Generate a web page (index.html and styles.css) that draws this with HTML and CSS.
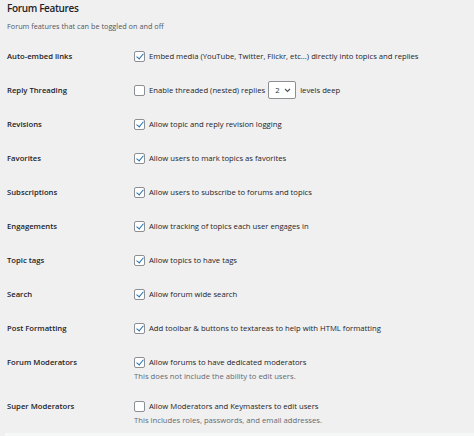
FILE: index.html
```html
<!DOCTYPE html>
<html lang="en">
<head>
    <meta charset="UTF-8">
    <title>Forum Features</title>
    <link rel="stylesheet" href="styles.css">
</head>
<body>
    <div class="wrap">
        <h2 class="title">Forum Features</h2>
        <p class="intro">Forum features that can be toggled on and off</p>

        <div class="settings">
            <div class="row">
                <div class="label">Auto-embed links</div>
                <div class="field"><span class="check on"></span>Embed media (YouTube, Twitter, Flickr, etc...) directly into topics and replies</div>
            </div>
            <div class="row">
                <div class="label">Reply Threading</div>
                <div class="field"><span class="check"></span>Enable threaded (nested) replies <span class="select">2<svg width="7" height="5" viewBox="0 0 7 5"><path d="M1 1l2.5 2.5L6 1" fill="none" stroke="#50575e" stroke-width="1.2"/></svg></span> levels deep</div>
            </div>
            <div class="row">
                <div class="label">Revisions</div>
                <div class="field"><span class="check on"></span>Allow topic and reply revision logging</div>
            </div>
            <div class="row">
                <div class="label">Favorites</div>
                <div class="field"><span class="check on"></span>Allow users to mark topics as favorites</div>
            </div>
            <div class="row">
                <div class="label">Subscriptions</div>
                <div class="field"><span class="check on"></span>Allow users to subscribe to forums and topics</div>
            </div>
            <div class="row">
                <div class="label">Engagements</div>
                <div class="field"><span class="check on"></span>Allow tracking of topics each user engages in</div>
            </div>
            <div class="row">
                <div class="label">Topic tags</div>
                <div class="field"><span class="check on"></span>Allow topics to have tags</div>
            </div>
            <div class="row">
                <div class="label">Search</div>
                <div class="field"><span class="check on"></span>Allow forum wide search</div>
            </div>
            <div class="row">
                <div class="label">Post Formatting</div>
                <div class="field"><span class="check on"></span>Add toolbar &amp; buttons to textareas to help with HTML formatting</div>
            </div>
            <div class="row has-desc">
                <div class="label">Forum Moderators</div>
                <div class="field">
                    <div><span class="check on"></span>Allow forums to have dedicated moderators</div>
                    <div class="desc">This does not include the ability to edit users.</div>
                </div>
            </div>
            <div class="row has-desc">
                <div class="label">Super Moderators</div>
                <div class="field">
                    <div><span class="check"></span>Allow Moderators and Keymasters to edit users</div>
                    <div class="desc">This includes roles, passwords, and email addresses.</div>
                </div>
            </div>
        </div>
    </div>
    <div class="foot"></div>
</body>
</html>
```

FILE: styles.css
```css
*{
    margin: 0;
    padding: 0;
    box-sizing: border-box;
}
body{
    background-color: #f0f0f1;
    color: #1d2327;
    font-family: "Open Sans", "Noto Sans", sans-serif;
    font-size: 7.7px;
    width: 474px;
    height: 436px;
    overflow: hidden;
}
.wrap{
    padding: 0 7px;
    height: 433px;
}
.title{
    font-size: 10px;
    font-weight: 600;
    line-height: 14px;
    letter-spacing: -0.35px;
    padding-top: 1px;
}
.intro{
    margin-top: 4px;
    font-size: 7.3px;
    line-height: 14px;
    color: #50575e;
}
.settings{
    margin-top: 6px;
}
.row{
    display: flex;
    padding: 10px 0;
    line-height: 14px;
}
.row.has-desc{
    padding-bottom: 6px;
}
.label{
    width: 127px;
    flex-shrink: 0;
    font-weight: 600;
}
.field{
    display: flex;
    align-items: center;
    white-space: nowrap;
    height: 14px;
}
.has-desc .field{
    display: block;
    height: auto;
}
.has-desc .field > div{
    display: flex;
    align-items: center;
}
.check{
    display: inline-block;
    position: relative;
    width: 11px;
    height: 11px;
    margin-right: 4px;
    border: 1px solid #8c8f94;
    border-radius: 2px;
    background-color: #fff;
}
.check.on::after{
    content: "";
    position: absolute;
    left: 3px;
    top: 0px;
    width: 3px;
    height: 6px;
    border: solid #2271b1;
    border-width: 0 1.5px 1.5px 0;
    transform: rotate(40deg);
}
.select{
    display: inline-flex;
    align-items: center;
    justify-content: space-between;
    width: 28px;
    height: 18px;
    margin: 0 4px 0 3px;
    padding: 0 4px 0 6px;
    border: 1px solid #8c8f94;
    border-radius: 2px;
    background-color: #fff;
    color: #2c3338;
}
.desc{
    color: #646970;
}
.foot{
    height: 3px;
    margin-left: 5px;
    background-color: #f6f7f7;
}
```
